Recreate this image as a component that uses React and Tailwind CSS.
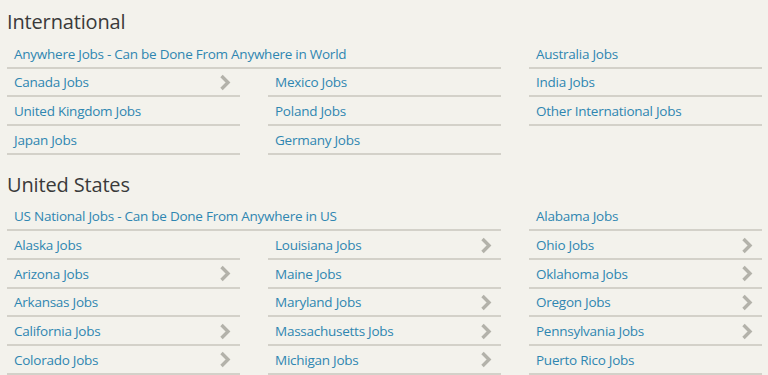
import React from 'react';

// Job location sections, laid out row by row across three columns
const sections = [
  {
    title: 'International',
    wide: 'Anywhere Jobs - Can be Done From Anywhere in World',
    items: [
      { name: 'Australia Jobs' },
      { name: 'Canada Jobs', more: true },
      { name: 'Mexico Jobs' },
      { name: 'India Jobs' },
      { name: 'United Kingdom Jobs' },
      { name: 'Poland Jobs' },
      { name: 'Other International Jobs' },
      { name: 'Japan Jobs' },
      { name: 'Germany Jobs' }
    ]
  },
  {
    title: 'United States',
    wide: 'US National Jobs - Can be Done From Anywhere in US',
    items: [
      { name: 'Alabama Jobs' },
      { name: 'Alaska Jobs' },
      { name: 'Louisiana Jobs', more: true },
      { name: 'Ohio Jobs', more: true },
      { name: 'Arizona Jobs', more: true },
      { name: 'Maine Jobs' },
      { name: 'Oklahoma Jobs', more: true },
      { name: 'Arkansas Jobs' },
      { name: 'Maryland Jobs', more: true },
      { name: 'Oregon Jobs', more: true },
      { name: 'California Jobs', more: true },
      { name: 'Massachusetts Jobs', more: true },
      { name: 'Pennsylvania Jobs', more: true },
      { name: 'Colorado Jobs', more: true },
      { name: 'Michigan Jobs', more: true },
      { name: 'Puerto Rico Jobs' }
    ]
  }
];

function Chevron() {
  return (
    <svg width="12" height="17" viewBox="0 0 12 17" className="shrink-0">
      <polyline
        points="2.5,2 9,8.5 2.5,15"
        fill="none"
        stroke="#b3b2aa"
        strokeWidth="3.4"
        strokeLinejoin="miter"
      />
    </svg>
  );
}

function Row({ name, more, wide }) {
  return (
    <a
      href="#"
      className={
        'flex h-[28.67px] items-center justify-between border-b-2 border-[#d3d1c9] pl-[7px] pr-[9px] pt-[1px] text-[13.5px] tracking-[-0.25px] text-[#2f86b1] ' +
        (wide ? 'col-span-2' : '')
      }
    >
      <span>{name}</span>
      {more && <Chevron />}
    </a>
  );
}

export default function App() {
  return (
    <div
      className="min-h-screen bg-[#f3f2ec] pl-[7px] pr-[6px]"
      style={{ fontFamily: '"Open Sans", "Noto Sans", sans-serif' }}
    >
      {sections.map((section, i) => (
        <section key={section.title}>
          <h2
            className={
              'pb-1 text-[20px] leading-[28px] tracking-[-0.15px] text-[#3a3a3a] ' +
              (i === 0 ? 'pt-2' : 'pt-4')
            }
          >
            {section.title}
          </h2>
          <div className="grid grid-cols-3 gap-x-[28px]">
            <Row name={section.wide} wide />
            {section.items.map((item) => (
              <Row key={item.name} name={item.name} more={item.more} />
            ))}
          </div>
        </section>
      ))}
    </div>
  );
}
